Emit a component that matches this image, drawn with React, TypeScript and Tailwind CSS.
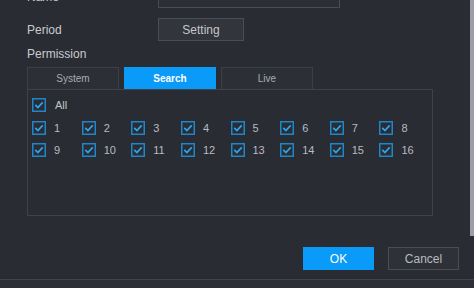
import React from "react";

const Check = () => (
  <svg width="14" height="14" viewBox="0 0 14 14" className="shrink-0">
    <rect x="0.75" y="0.75" width="12.5" height="12.5" fill="#2a2d33" stroke="#1f86c9" strokeWidth="1.5" />
    <path d="M3.3 6.9 L5.9 9.5 L10.7 4.3" fill="none" stroke="#2ea6ee" strokeWidth="1.7" />
  </svg>
);

const CheckItem = ({ label }: { label: string }) => (
  <div className="flex items-center gap-[8px] h-[14px]">
    <Check />
    <span className="text-[11px] leading-none text-[#b9bbc0]">{label}</span>
  </div>
);

const tabs = ["System", "Search", "Live"];

export default function App() {
  const row1 = ["1", "2", "3", "4", "5", "6", "7", "8"];
  const row2 = ["9", "10", "11", "12", "13", "14", "15", "16"];

  return (
    <div
      className="w-[474px] h-[288px] bg-[#2a2c33] overflow-hidden flex flex-col"
      style={{ fontFamily: '"Liberation Sans", Arial, sans-serif' }}
    >
      {/* scrollable form */}
      <div className="flex h-[236px] shrink-0">
        <div className="flex-1 pl-[27px]">
          {/* Name row (cut at top) */}
          <div className="flex items-center h-[23px] -mt-[15px]">
            <span className="w-[131px] text-[12px] text-[#c9cbd0]">Name</span>
            <div className="w-[182px] h-[23px] border border-[#4a4c53] bg-[#2c2e35]" />
          </div>

          {/* Period */}
          <div className="flex items-center h-[23px] mt-[10px]">
            <span className="w-[131px] text-[12px] text-[#c9cbd0]">Period</span>
            <button className="w-[86px] h-[23px] border border-[#4b4d54] bg-[#33353c] text-[12px] text-[#c4c6cb]">
              Setting
            </button>
          </div>

          {/* Permission */}
          <div className="h-[26px] flex items-center text-[12px] text-[#c9cbd0]">Permission</div>

          {/* tabs */}
          <div className="flex gap-[5px] h-[22px]">
            {tabs.map((t) =>
              t === "Search" ? (
                <div
                  key={t}
                  className="w-[92px] flex items-center justify-center bg-[#0a9af7] text-white text-[10px] font-bold"
                >
                  {t}
                </div>
              ) : (
                <div
                  key={t}
                  className="w-[92px] flex items-center justify-center border border-b-0 border-[#3d3f46] bg-[#2d2f36] text-[#a9abb1] text-[10px]"
                >
                  {t}
                </div>
              )
            )}
          </div>

          {/* content box */}
          <div className="w-[406px] h-[127px] border border-[#40424a] pl-[4px] pt-[8px]">
            <div className="flex items-center gap-[9px] h-[14px]">
              <Check />
              <span className="text-[11px] leading-none text-[#c3c5ca]">All</span>
            </div>
            <div className="grid grid-cols-8 w-[397px] mt-[9px] gap-y-[8px]">
              {row1.map((n) => (
                <CheckItem key={n} label={n} />
              ))}
              {row2.map((n) => (
                <CheckItem key={n} label={n} />
              ))}
            </div>
          </div>
        </div>
        <div className="w-[4px] bg-[#9c9ea5]" />
      </div>

      {/* footer */}
      <div className="h-[43px] shrink-0 flex justify-end items-start pt-[11px] pr-[15px] gap-[14px]">
        <button className="w-[71px] h-[23px] bg-[#0a9af7] text-white text-[12px]">OK</button>
        <button className="w-[71px] h-[23px] border border-[#4b4d54] bg-[#2f3138] text-[#b9bbc0] text-[12px]">
          Cancel
        </button>
      </div>
      <div className="h-px bg-[#41434a] shrink-0" />
      <div className="flex-1 bg-[#2d2f36]" />
    </div>
  );
}
